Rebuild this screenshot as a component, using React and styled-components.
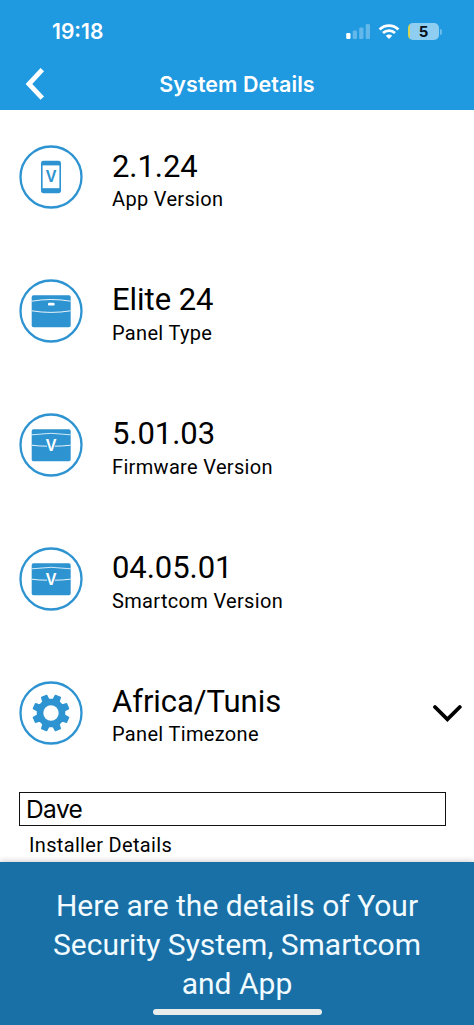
import React, { useState } from 'react';
import styled, { createGlobalStyle } from 'styled-components';

const GlobalStyle = createGlobalStyle`
  * {
    box-sizing: border-box;
  }

  body {
    margin: 0;
    background-color: #fff;
    font-family: Roboto, "Liberation Sans", sans-serif;
  }
`;

const PageContainer = styled.div`
  display: flex;
  flex-direction: column;
  height: 1025px;
  width: 100%;
  overflow: hidden;
  background-color: #fff;
  color: #000;
`;

// Header with status bar and title
const Header = styled.header`
  height: 110px;
  flex-shrink: 0;
  background-color: #1f99e0;
  color: #fff;
  font-family: Inter, sans-serif;
`;

const StatusBar = styled.div`
  display: flex;
  align-items: center;
  justify-content: space-between;
  height: 63px;
  padding: 0 32px 0 52px;
`;

const Clock = styled.span`
  font-size: 21px;
  font-weight: 600;
  line-height: 24px;
  letter-spacing: 0;
`;

const StatusIcons = styled.div`
  display: flex;
  align-items: center;
  gap: 8px;
`;

const Battery = styled.div`
  display: flex;
  align-items: center;
  gap: 1px;
`;

const BatteryBody = styled.div`
  width: 31px;
  height: 17px;
  border-radius: 5px;
  background: linear-gradient(to right, #d9d552 2px, #8fcdf1 2px);
  color: #06111c;
  font-size: 15px;
  font-weight: 700;
  line-height: 17px;
  text-align: center;
`;

const BatteryTip = styled.div`
  width: 2px;
  height: 6px;
  border-radius: 0 2px 2px 0;
  background-color: #6cbdea;
`;

const TitleBar = styled.div`
  display: grid;
  grid-template-columns: 72px 1fr 72px;
  align-items: center;
  height: 41px;
`;

const BackButton = styled.button`
  display: flex;
  padding: 0 0 0 24px;
  border: none;
  background: none;
  color: inherit;
  cursor: pointer;
`;

const Title = styled.h1`
  margin: 0;
  font-size: 21.5px;
  font-weight: 600;
  line-height: 26px;
  letter-spacing: 0.05px;
  text-align: center;
  white-space: nowrap;
`;

// Details list
const Content = styled.main`
  flex: 1;
  min-height: 0;
  padding-top: 0.5px;
  overflow: hidden;
`;

const DetailRow = styled.div`
  display: flex;
  align-items: center;
  height: 133.8px;
  padding: 0 12px 0 19px;
`;

const IconCircle = styled.div`
  display: flex;
  width: 64px;
  height: 64px;
  margin-right: 29px;
  flex-shrink: 0;
`;

const DetailText = styled.div`
  flex: 1;
  padding-top: 4px;
  white-space: nowrap;
`;

const Value = styled.div`
  font-size: 31px;
  line-height: 37px;
  letter-spacing: -0.05px;
`;

const Label = styled.div`
  font-size: 20px;
  line-height: 24px;
  letter-spacing: 0.33px;
  margin-top: 2.5px;
`;

const Expand = styled.button`
  display: flex;
  padding: 2px 0 0;
  border: none;
  background: none;
  color: #000;
  cursor: pointer;
`;

const Installer = styled.div`
  padding: 0 28px 0 19px;
  margin-top: 12.5px;
`;

const InstallerInput = styled.input`
  display: block;
  width: 100%;
  height: 34px;
  padding: 0 6px;
  border: 1.5px solid #111;
  border-radius: 0;
  background-color: #fff;
  color: #000;
  font-family: Inter, sans-serif;
  font-size: 24.5px;
  font-weight: 400;
  letter-spacing: -0.6px;
  outline: none;
`;

const InstallerLabel = styled.label`
  display: block;
  margin: 7px 0 0 10px;
  font-size: 20px;
  line-height: 24px;
  letter-spacing: 0.33px;
`;

// Help panel at the bottom
const Footer = styled.footer`
  position: relative;
  display: flex;
  flex-direction: column;
  align-items: center;
  height: 163px;
  flex-shrink: 0;
  padding-top: 24px;
  background-color: #1970a7;
  box-shadow: 0 -1px 6px rgba(0, 0, 0, 0.2);
  color: #f2fbff;
`;

const HelpText = styled.p`
  width: 385px;
  height: 117px;
  margin: 0;
  font-size: 30px;
  line-height: 39px;
  letter-spacing: 0;
  text-align: center;
`;

const HomeIndicator = styled.div`
  width: 169px;
  height: 6px;
  margin-top: 6px;
  border-radius: 3px;
  background-color: #e8eceb;
`;

// SVG Icons
const BLUE = '#2d93d1';

const Letter = styled.text`
  font-family: "Liberation Sans", sans-serif;
  font-size: 16px;
  font-weight: 700;
  text-anchor: middle;
`;

const SignalIcon = () => (
  <svg width="25" height="17" viewBox="0 0 25 17" fill="#fff">
    <rect x="1.2" y="10" width="4.3" height="6" rx="1.3" />
    <g opacity="0.3">
      <rect x="7.7" y="7.5" width="4.3" height="8.5" rx="1.3" />
      <rect x="14.2" y="4.5" width="4.3" height="11.5" rx="1.3" />
      <rect x="20.7" y="1" width="4.3" height="15" rx="1.3" />
    </g>
  </svg>
);

const WifiIcon = () => (
  <svg width="22" height="17" viewBox="0 0 22 17" fill="none" stroke="#fff" strokeWidth="2.8">
    <path d="M1.6 6.4a13.4 13.4 0 0 1 18.8 0" />
    <path d="M5 10.1a8.6 8.6 0 0 1 12 0" />
    <path d="M11 16l-3.2-3.2a4.6 4.6 0 0 1 6.4 0z" fill="#fff" stroke="none" />
  </svg>
);

const BackIcon = () => (
  <svg width="22" height="34" viewBox="0 0 22 34" fill="none" stroke="currentColor" strokeWidth="4.8">
    <polyline points="18.3 2.6 4.9 17 18.3 31.2" />
  </svg>
);

const ChevronDownIcon = () => (
  <svg width="30" height="20" viewBox="0 0 30 20" fill="none" stroke="currentColor" strokeWidth="3.8" strokeLinecap="round">
    <polyline points="3 3 15.4 15.4 27.8 3" />
  </svg>
);

const Ring = ({ children }) => (
  <svg width="64" height="64" viewBox="0 0 64 64">
    <circle cx="32" cy="32" r="30.5" fill="none" stroke={BLUE} strokeWidth="2.3" />
    {children}
  </svg>
);

const PhoneIcon = () => (
  <Ring>
    <rect x="22" y="15.8" width="20" height="32.4" rx="2.6" fill={BLUE} />
    <rect x="23.6" y="20.4" width="16.8" height="22.8" fill="#fff" />
    <Letter x="32" y="37" fill={BLUE}>V</Letter>
  </Ring>
);

const PanelIcon = () => (
  <Ring>
    <rect x="12.7" y="16.2" width="39" height="32" rx="1.8" fill={BLUE} />
    <path d="M12.7 22.2Q32 18.8 51.7 22.2" fill="none" stroke="#fff" strokeWidth="0.9" />
    <path d="M12.7 31.8Q32 35 51.7 31.8" fill="none" stroke="#fff" strokeWidth="0.9" />
    <rect x="29" y="23.8" width="6.6" height="2.8" rx="1.2" fill="#fff" />
  </Ring>
);

const PanelVIcon = () => (
  <Ring>
    <rect x="12.7" y="16.2" width="39" height="32" rx="1.8" fill={BLUE} />
    <path d="M12.7 21.8Q32 18.8 51.7 21.8" fill="none" stroke="#fff" strokeWidth="0.8" />
    <path d="M12.7 32.2Q20 33.2 28 33.2M36 33.2Q43 33.2 51.7 32.2" fill="none" stroke="#fff" strokeWidth="0.9" />
    <Letter x="32" y="38" fill="#fff">V</Letter>
  </Ring>
);

// Eight teeth, turned so that a gap faces straight up
const gearPath = () => {
  const points = [];
  for (let i = 0; i < 8; i += 1) {
    const center = 22.5 + i * 45;
    [[-16, 13.6], [-12.5, 14.2], [-8.5, 18.1], [8.5, 18.1], [12.5, 14.2], [16, 13.6]].forEach(([offset, radius]) => {
      const angle = ((center + offset) * Math.PI) / 180;
      points.push(`${(32 + radius * Math.sin(angle)).toFixed(2)} ${(32 - radius * Math.cos(angle)).toFixed(2)}`);
    });
  }
  return `M${points.join('L')}Z`;
};

const GearIcon = () => (
  <Ring>
    <path d={gearPath()} fill={BLUE} stroke={BLUE} strokeWidth="1.4" strokeLinejoin="round" />
    <circle cx="32" cy="32" r="7.7" fill="#fff" />
  </Ring>
);

const details = [
  { label: 'App Version', value: '2.1.24', Icon: PhoneIcon },
  { label: 'Panel Type', value: 'Elite 24', Icon: PanelIcon },
  { label: 'Firmware Version', value: '5.01.03', Icon: PanelVIcon },
  { label: 'Smartcom Version', value: '04.05.01', Icon: PanelVIcon },
  { label: 'Panel Timezone', value: 'Africa/Tunis', Icon: GearIcon, expandable: true },
];

const App = () => {
  const [installer, setInstaller] = useState('Dave');

  return (
    <PageContainer>
      <GlobalStyle />
      <Header>
        <StatusBar>
          <Clock>19:18</Clock>
          <StatusIcons>
            <SignalIcon />
            <WifiIcon />
            <Battery>
              <BatteryBody>5</BatteryBody>
              <BatteryTip />
            </Battery>
          </StatusIcons>
        </StatusBar>
        <TitleBar>
          <BackButton aria-label="Back">
            <BackIcon />
          </BackButton>
          <Title>System Details</Title>
        </TitleBar>
      </Header>

      <Content>
        {details.map(({ label, value, Icon, expandable }) => (
          <DetailRow key={label}>
            <IconCircle>
              <Icon />
            </IconCircle>
            <DetailText>
              <Value>{value}</Value>
              <Label>{label}</Label>
            </DetailText>
            {expandable && (
              <Expand aria-label="Change timezone">
                <ChevronDownIcon />
              </Expand>
            )}
          </DetailRow>
        ))}
        <Installer>
          <InstallerInput
            id="installer"
            value={installer}
            onChange={(e) => setInstaller(e.target.value)}
          />
          <InstallerLabel htmlFor="installer">Installer Details</InstallerLabel>
        </Installer>
      </Content>

      <Footer>
        <HelpText>Here are the details of Your Security System, Smartcom and App</HelpText>
        <HomeIndicator />
      </Footer>
    </PageContainer>
  );
};

export default App;
